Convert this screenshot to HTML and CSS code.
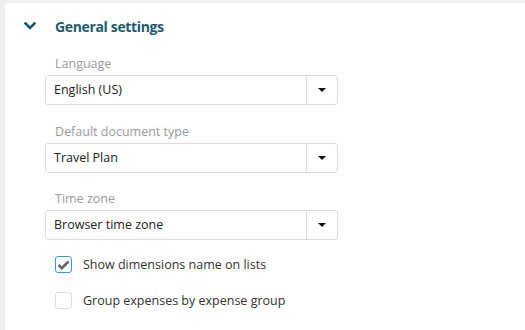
FILE: index.html
```html
<!DOCTYPE html>
<html>
<head>
<meta charset="utf-8">
<link rel="stylesheet" href="styles.css">
</head>
<body>
<div class="panel">
  <div class="header">
    <svg class="chev" width="12" height="8" viewBox="0 0 12 8"><path d="M1.5 1.5 L6 6 L10.5 1.5" fill="none" stroke="#0f5a78" stroke-width="2.6" stroke-linecap="square"/></svg>
    <span class="title">General settings</span>
  </div>
  <div class="fields">
    <div class="field">
      <div class="label">Language</div>
      <div class="select"><span class="value">English (US)</span><span class="arrow"><i></i></span></div>
    </div>
    <div class="field second">
      <div class="label">Default document type</div>
      <div class="select"><span class="value">Travel Plan</span><span class="arrow"><i></i></span></div>
    </div>
    <div class="field">
      <div class="label">Time zone</div>
      <div class="select"><span class="value">Browser time zone</span><span class="arrow"><i></i></span></div>
    </div>
  </div>
  <div class="checks">
    <label class="check">
      <span class="box checked"><svg width="13" height="10" viewBox="0 0 13 10"><path d="M1.5 5 L4.8 8.2 L11.5 1.5" fill="none" stroke="#666" stroke-width="2.6"/></svg></span>
      <span>Show dimensions name on lists</span>
    </label>
    <label class="check">
      <span class="box"></span>
      <span>Group expenses by expense group</span>
    </label>
  </div>
</div>
</body>
</html>
```
FILE: styles.css
```css
html, body { margin: 0; padding: 0; }
body {
  background: #efefef;
  font-family: "Open Sans", "Noto Sans", sans-serif;
  width: 525px;
  height: 330px;
  overflow: hidden;
}
.panel {
  margin: 3px 0 0 5px;
  background: #fff;
  border-radius: 3px 0 0 0;
  height: 327px;
  box-sizing: border-box;
  padding: 15px 0 0 0;
}
.header {
  display: flex;
  align-items: center;
  height: 16px;
}
.chev { margin-left: 19px; margin-right: 19px; }
.title {
  font-size: 14px;
  font-weight: 700;
  color: #1d5a70;
  letter-spacing: -0.35px;
}
.fields {
  margin-left: 40px;
  margin-top: 22px;
  width: 293px;
  display: flex;
  flex-direction: column;
  gap: 18px;
}
.field.second { margin-top: 1px; }
.label {
  color: #9a9a9a;
  font-size: 12.5px;
  margin-left: 10px;
  height: 16px;
  line-height: 16px;
  margin-bottom: 3px;
}
.select {
  display: flex;
  height: 30px;
  border: 1px solid #dcdcdc;
  border-radius: 3px;
  box-sizing: border-box;
}
.value {
  flex: 1;
  padding-left: 8px;
  font-size: 12.5px;
  line-height: 28px;
  color: #222;
}
.arrow {
  width: 30px;
  border-left: 1px solid #dcdcdc;
  display: flex;
  align-items: center;
  justify-content: center;
}
.arrow i {
  width: 0; height: 0;
  border-left: 4px solid transparent;
  border-right: 4px solid transparent;
  border-top: 4px solid #111;
}
.checks {
  margin-left: 50px;
  margin-top: 16px;
  display: flex;
  flex-direction: column;
  gap: 19px;
}
.check {
  display: flex;
  align-items: center;
  font-size: 12.5px;
  color: #333;
  height: 17px;
}
.box {
  width: 17px; height: 17px;
  box-sizing: border-box;
  border: 1px solid #dcdcdc;
  border-radius: 3px;
  margin-right: 11px;
  display: flex;
  align-items: center;
  justify-content: center;
}
.box.checked { border-color: #2aa0d0; }
```
